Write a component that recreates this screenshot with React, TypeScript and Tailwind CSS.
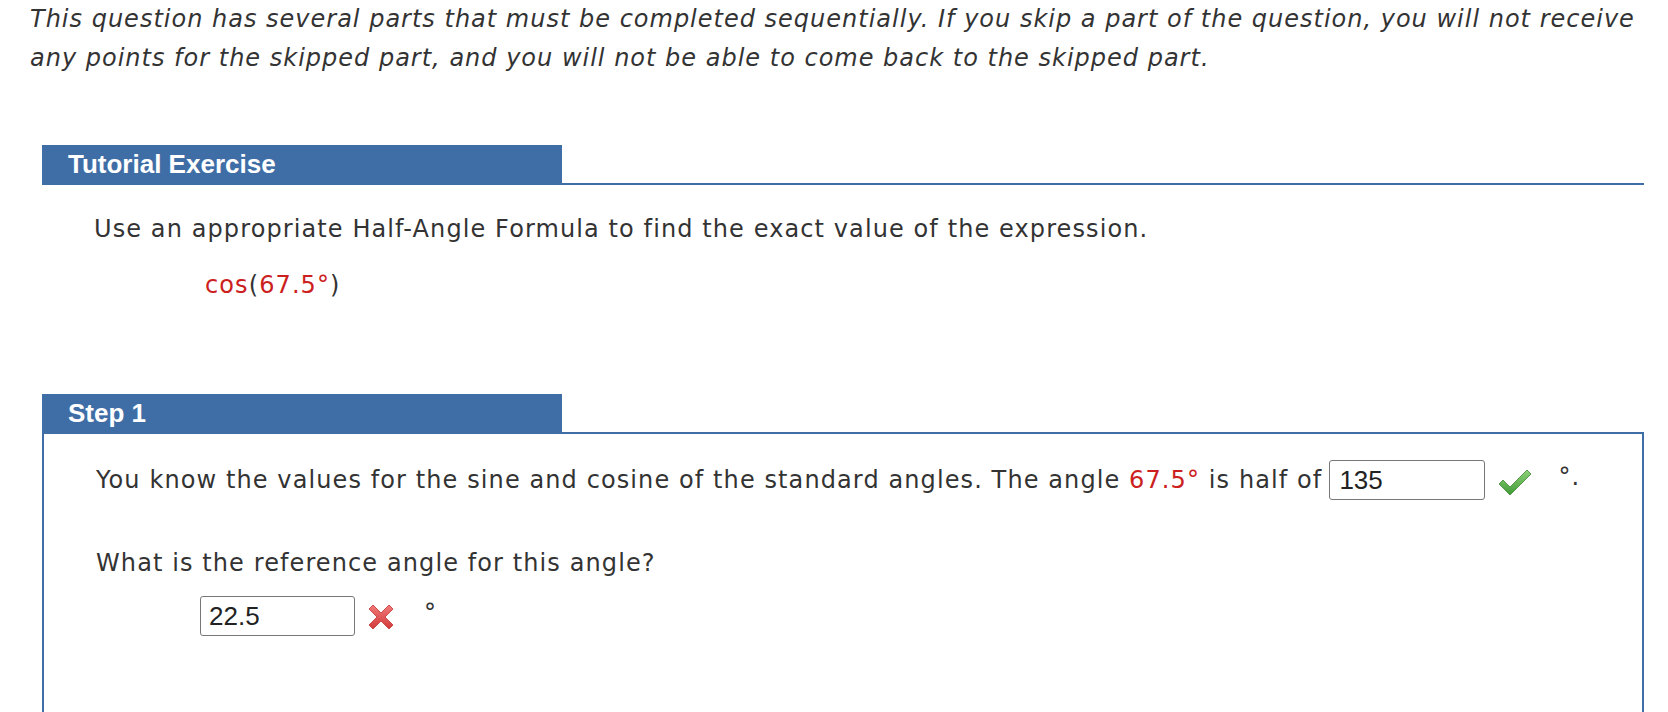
import React from "react";

function Check() {
  return (
    <svg width="34" height="28" viewBox="0 0 34 28" className="block">
      <defs>
        <linearGradient id="cg" x1="0" y1="0" x2="0" y2="1">
          <stop offset="0" stopColor="#8fd17a" />
          <stop offset="1" stopColor="#3f9a35" />
        </linearGradient>
      </defs>
      <path
        d="M1 15 L5 11 L12 18 L29 1 L33 5 L12 26 Z"
        fill="url(#cg)"
        stroke="#3d8a33"
        strokeWidth="0.8"
        strokeLinejoin="round"
      />
    </svg>
  );
}

function Cross() {
  return (
    <svg width="30" height="30" viewBox="0 0 30 30" className="block">
      <defs>
        <linearGradient id="xg" x1="0" y1="0" x2="0" y2="1">
          <stop offset="0" stopColor="#f07a7a" />
          <stop offset="1" stopColor="#d23a3a" />
        </linearGradient>
      </defs>
      <path
        d="M3 7 L7 3 L15 11 L23 3 L27 7 L19 15 L27 23 L23 27 L15 19 L7 27 L3 23 L11 15 Z"
        fill="url(#xg)"
        stroke="#c43434"
        strokeWidth="0.8"
        strokeLinejoin="round"
      />
    </svg>
  );
}

export default function App() {
  const body = { fontFamily: '"DejaVu Sans", Verdana, sans-serif' };
  const arial = { fontFamily: '"Liberation Sans", Arial, sans-serif' };
  return (
    <div className="w-[1668px] h-[712px] overflow-hidden bg-white text-[#333]" style={body}>
      <p className="pl-[30px] w-[1660px] italic text-[24px] tracking-[1px] leading-[39px] text-[#333]">
        This question has several parts that must be completed sequentially. If you skip a part of the question, you will not receive any points for the skipped part, and you will not be able to come back to the skipped part.
      </p>

      {/* Tutorial Exercise */}
      <div className="ml-[42px] w-[1602px] mt-[67px]">
        <div
          className="w-[520px] h-[38px] bg-[#3f6ea7] flex items-center pl-[26px] text-white font-bold text-[26px]"
          style={arial}
        >
          Tutorial Exercise
        </div>
        <div className="border-t-2 border-[#3f6ea7] pl-[52px] pt-[28px] h-[211px]">
          <div className="text-[24px] tracking-[1.1px] leading-[32px]">
            Use an appropriate Half-Angle Formula to find the exact value of the expression.
          </div>
          <div className="pl-[111px] mt-[24px] text-[24px] tracking-[1.1px] leading-[32px]">
            <span className="text-[#cc2020]">cos</span>(<span className="text-[#cc2020]">67.5°</span>)
          </div>
        </div>

        {/* Step 1 */}
        <div
          className="w-[520px] h-[38px] bg-[#3f6ea7] flex items-center pl-[26px] text-white font-bold text-[26px]"
          style={arial}
        >
          Step 1
        </div>
        <div className="border-t-2 border-x-2 border-[#3f6ea7] pl-[52px] pt-[26px] h-[300px]">
          <div className="flex items-center h-[40px] text-[24px] tracking-[1.1px]">
            <span className="whitespace-nowrap">
              You know the values for the sine and cosine of the standard angles. The angle{" "}
              <span className="text-[#cc2020]">67.5°</span> is half of
            </span>
            <div
              className="ml-[7px] w-[156px] h-[40px] shrink-0 border border-[#777] rounded-[3px] flex items-center pl-[9px] text-[26px] tracking-normal text-[#222]"
              style={arial}
            >
              135
            </div>
            <div className="ml-[13px] mt-[6px]">
              <Check />
            </div>
            <span className="ml-[26px] -mt-[6px]">°.</span>
          </div>
          <div className="mt-[47px] text-[24px] tracking-[1.1px] leading-[32px]">What is the reference angle for this angle?</div>
          <div className="flex items-center mt-[17px] pl-[104px] h-[40px]">
            <div
              className="w-[155px] h-[40px] border border-[#777] rounded-[3px] flex items-center pl-[8px] text-[26px] text-[#222]"
              style={arial}
            >
              22.5
            </div>
            <div className="ml-[11px] mt-[2px]">
              <Cross />
            </div>
            <span className="ml-[28px] -mt-[6px] text-[24px]">°</span>
          </div>
        </div>
      </div>
    </div>
  );
}
